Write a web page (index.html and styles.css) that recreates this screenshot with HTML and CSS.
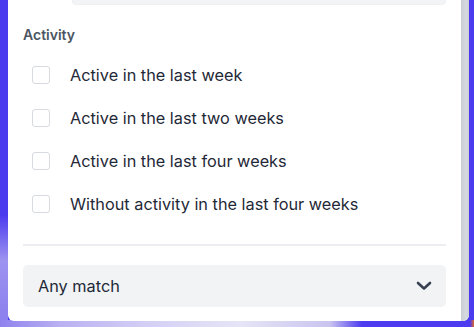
FILE: index.html
```
<!DOCTYPE html>
<html>
<head>
<meta charset="utf-8">
<link rel="stylesheet" href="styles.css">
</head>
<body>
<div class="frame">
  <div class="panel">
    <div class="content">
      <div class="input-tail"></div>
      <div class="section-title">Activity</div>
      <ul class="options">
        <li class="option"><span class="box"></span><span class="label">Active in the last week</span></li>
        <li class="option"><span class="box"></span><span class="label">Active in the last two weeks</span></li>
        <li class="option"><span class="box"></span><span class="label">Active in the last four weeks</span></li>
        <li class="option"><span class="box"></span><span class="label">Without activity in the last four weeks</span></li>
      </ul>
      <div class="divider"></div>
      <div class="select">
        <span class="select-text">Any match</span>
        <svg class="chevron" width="16" height="10" viewBox="0 0 16 10"><path d="M2 2 L8 7.5 L14 2" fill="none" stroke="#374151" stroke-width="2.6" stroke-linecap="round" stroke-linejoin="round"/></svg>
      </div>
    </div>
    <div class="scrollbar"></div>
  </div>
</div>
</body>
</html>
```
FILE: styles.css
```
html, body {
  margin: 0;
  padding: 0;
}
body {
  width: 474px;
  height: 327px;
  overflow: hidden;
  background: #4b3bef;
  font-family: Inter, "Liberation Sans", sans-serif;
}
.frame {
  height: 327px;
  padding: 0 5px 0 8px;
  box-sizing: border-box;
  background:
    linear-gradient(90deg, #8f82ee 0px, #b9b1f2 60px, #d4d0f5 150px, #e6e4f6 240px, #c9c4ef 330px, #4c3bef 362px, #4c3bef 470px, #e0652b 474px) bottom / 100% 7px no-repeat,
    linear-gradient(180deg, #4b3bef 0px, #4b3bef 215px, #9d93f0 260px, #8b80ee 320px) left / 8px 100% no-repeat,
    #4b3bef;
}
.panel {
  display: flex;
  height: 321px;
  background: #ffffff;
  border-radius: 0 0 6px 6px;
  overflow: hidden;
}
.content {
  flex: 1;
  padding: 0 15px;
}
.scrollbar {
  width: 8px;
  background: linear-gradient(90deg, #c9cdd4, #d6d9df 60%, #cdd1d7);
  border-radius: 0 0 4px 0;
}
.input-tail {
  height: 4px;
  margin-left: 49px;
  background: #f3f4f6;
  border-radius: 0 0 4px 4px;
  border: 1px solid #eef0f3;
  border-top: none;
}
.section-title {
  margin-top: 21px;
  font-size: 14px;
  font-weight: 600;
  color: #4b5563;
  line-height: 17px;
}
.options {
  list-style: none;
  margin: 23px 0 0 0;
  padding: 0;
  display: flex;
  flex-direction: column;
  gap: 25px;
}
.option {
  display: flex;
  align-items: center;
  height: 18px;
  padding-left: 9px;
}
.box {
  width: 18px;
  height: 18px;
  box-sizing: border-box;
  border: 1.5px solid #d7dade;
  border-radius: 3px;
  background: #fff;
  flex: none;
}
.label {
  margin-left: 20px;
  font-size: 16.3px;
  color: #1f2937;
  line-height: 18px;
}
.divider {
  margin-top: 31px;
  height: 2px;
  background: #eceef1;
}
.select {
  margin-top: 19px;
  height: 42px;
  background: #f1f3f5;
  border-radius: 5px;
  display: flex;
  align-items: center;
  justify-content: space-between;
  padding: 0 14px 0 15px;
}
.select-text {
  font-size: 16.3px;
  color: #1f2937;
}
.chevron {
  display: block;
}
```
